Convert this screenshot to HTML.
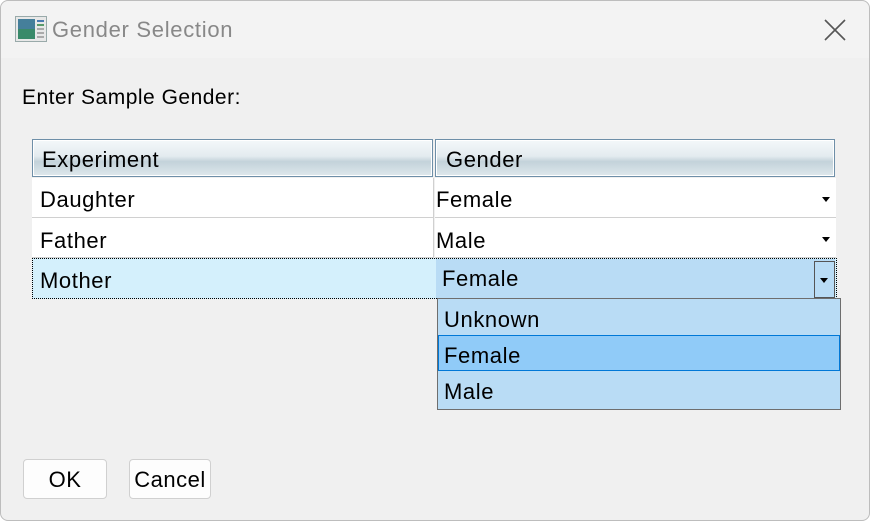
<!DOCTYPE html>
<html><head><style>
body{margin:0;width:870px;height:521px;background:#fff;overflow:hidden;font-family:"Liberation Sans",sans-serif;}
.win{position:absolute;left:0;top:0;width:870px;height:521px;box-shadow:inset 0 0 0 1px #bdbdbd;border-radius:8px;background:#f0f0f0;overflow:hidden;}
.t{position:absolute;white-space:nowrap;color:#000;font-size:22px;letter-spacing:0.6px;}
.hdr{position:absolute;top:139px;height:36px;border:1px solid #6e8fa8;background:linear-gradient(#f4f8fa 0%,#e3ebef 45%,#c3d2da 60%,#dfe8ec 100%);box-shadow:inset 0 0 0 1px #fff;}
.cell{position:absolute;height:39px;background:#fff;border-bottom:1px solid #d0d0d0;}
.arr{position:absolute;width:0;height:0;border-left:4px solid transparent;border-right:4px solid transparent;border-top:5px solid #000;}
.btn{position:absolute;top:459px;height:38px;background:#fdfdfd;border:1px solid #d0d0d0;border-radius:4px;font-size:22px;letter-spacing:0.5px;text-align:center;line-height:40px;}
</style></head><body>
<div class="win">
<div style="position:absolute;left:1px;top:1px;width:868px;height:57px;background:#f3f3f3;border-radius:8px 8px 0 0"></div>
<svg style="position:absolute;left:15px;top:16px" width="32" height="26" viewBox="0 0 32 26"><rect x="0.5" y="0.5" width="31" height="25" fill="#e8e8e8" stroke="#9aa"/><rect x="3" y="3" width="17" height="20" fill="#3a8a6a"/><rect x="3" y="3" width="17" height="10" fill="#4a7ab0" opacity=".7"/><rect x="22" y="4" width="7" height="2" fill="#4a7ab0"/><rect x="22" y="8" width="7" height="2" fill="#5a9a6a"/><rect x="22" y="12" width="7" height="2" fill="#aaa"/><rect x="22" y="16" width="7" height="2" fill="#aaa"/><rect x="22" y="20" width="7" height="2" fill="#aaa"/></svg>
<div class="t" style="left:52px;top:17px;font-size:22px;color:#888;letter-spacing:0.7px">Gender Selection</div>
<svg style="position:absolute;left:824px;top:19px" width="22" height="22"><path d="M1 1L21 21M21 1L1 21" stroke="#555" stroke-width="1.6"/></svg>
<div class="t" style="left:22px;top:86px;font-size:21px;letter-spacing:0.5px">Enter Sample Gender:</div>

<div class="hdr" style="left:32px;width:399px"></div>
<div class="hdr" style="left:435px;width:398px"></div>
<div class="t" style="left:42px;top:147px">Experiment</div>
<div class="t" style="left:446px;top:147px">Gender</div>

<div class="cell" style="left:32px;top:178px;width:401px;border-right:1px solid #d0d0d0"></div>
<div class="cell" style="left:435px;top:178px;width:401px"></div>
<div class="cell" style="left:32px;top:218px;width:401px;border-right:1px solid #d0d0d0"></div>
<div class="cell" style="left:435px;top:218px;width:401px"></div>
<div class="t" style="left:40px;top:187px">Daughter</div>
<div class="t" style="left:436px;top:187px">Female</div>
<div class="arr" style="left:822px;top:197px"></div>
<div class="t" style="left:40px;top:228px">Father</div>
<div class="t" style="left:436px;top:228px">Male</div>
<div class="arr" style="left:822px;top:237px"></div>

<div style="position:absolute;left:32px;top:258px;width:803px;height:39px;border:1px dotted #000;background:#d4f0fc"></div>
<div style="position:absolute;left:436px;top:259px;width:399px;height:39px;background:#b9dcf5"></div>
<div class="t" style="left:40px;top:268px">Mother</div>
<div class="t" style="left:442px;top:266px">Female</div>
<div style="position:absolute;left:814px;top:261px;width:19px;height:35px;border:1px solid #555;background:#b9dcf5"></div>
<div class="arr" style="left:820px;top:278px"></div>

<div style="position:absolute;left:437px;top:298px;width:402px;height:110px;border:1px solid #6e6e6e;background:#b9dcf5"></div>
<div style="position:absolute;left:438px;top:335px;width:400px;height:34px;border:1px solid #0078d7;background:#90cbf8"></div>
<div class="t" style="left:444px;top:307px">Unknown</div>
<div class="t" style="left:444px;top:343px">Female</div>
<div class="t" style="left:444px;top:379px">Male</div>

<div class="btn" style="left:23px;width:82px">OK</div>
<div class="btn" style="left:129px;width:80px">Cancel</div>
</div>
</body></html>
